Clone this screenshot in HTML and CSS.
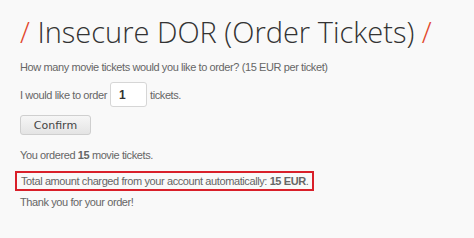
FILE: index.html
```html
<!DOCTYPE html>
<html lang="en">
<head>
  <meta charset="UTF-8" />
  <title>Insecure DOR (Order Tickets)</title>
  <link rel="stylesheet" href="styles.css">
</head>
<body>
  <div class="page">
    <h1 class="title"><span class="slash">/</span> Insecure DOR (Order Tickets) <span class="slash">/</span></h1>

    <p>How many movie tickets would you like to order? (15 EUR per ticket)</p>

    <form class="order" onsubmit="return false;">
      <div class="order-row">
        I would like to order <input type="text" class="qty" value="1"> tickets.
      </div>
      <button type="submit" class="confirm">Confirm</button>
    </form>

    <p>You ordered <b>15</b> movie tickets.</p>
    <p class="total">Total amount charged from your account automatically: <b>15 EUR</b>.</p>
    <p>Thank you for your order!</p>
  </div>
</body>
</html>
```

FILE: styles.css
```css
* {
  margin: 0;
  padding: 0;
  box-sizing: border-box;
}

html,
body {
  height: 100%;
}

body {
  background: #f9f9f9;
  font-family: 'Liberation Sans', Arial, sans-serif;
  font-size: 11px;
  letter-spacing: -0.4px;
  color: #666;
}

.page {
  padding: 14px 20px 0 20px;
}

.title {
  font-family: 'Open Sans', sans-serif;
  font-weight: 300;
  font-size: 29px;
  line-height: 36px;
  letter-spacing: 0;
  color: #333;
  margin-bottom: 10px;
  white-space: nowrap;
}

.slash {
  color: #e2472b;
}

p {
  line-height: 14px;
}

.order {
  margin-top: 8px;
}

.order-row {
  display: flex;
  align-items: center;
  gap: 3px;
}

.qty {
  width: 37px;
  height: 25px;
  border: 1px solid #d6d6d6;
  border-radius: 3px;
  background: #fff;
  padding: 0 8px;
  font-family: 'Liberation Sans', Arial, sans-serif;
  font-size: 12px;
  font-weight: bold;
  color: #333;
}

.confirm {
  margin-top: 8px;
  width: 71px;
  height: 20px;
  border: 1px solid #cfcfcf;
  border-radius: 3px;
  background: linear-gradient(#f6f6f6, #e4e4e4);
  font-family: 'DejaVu Sans', sans-serif;
  font-size: 11px;
  letter-spacing: 0;
  color: #444;
}

.order + p {
  margin-top: 13px;
}

.total {
  display: inline-block;
  margin: 9px 0 0 -5px;
  padding: 1px 4px;
  border: 2px solid #d9202a;
}

.total + p {
  margin-top: 4px;
}
```
